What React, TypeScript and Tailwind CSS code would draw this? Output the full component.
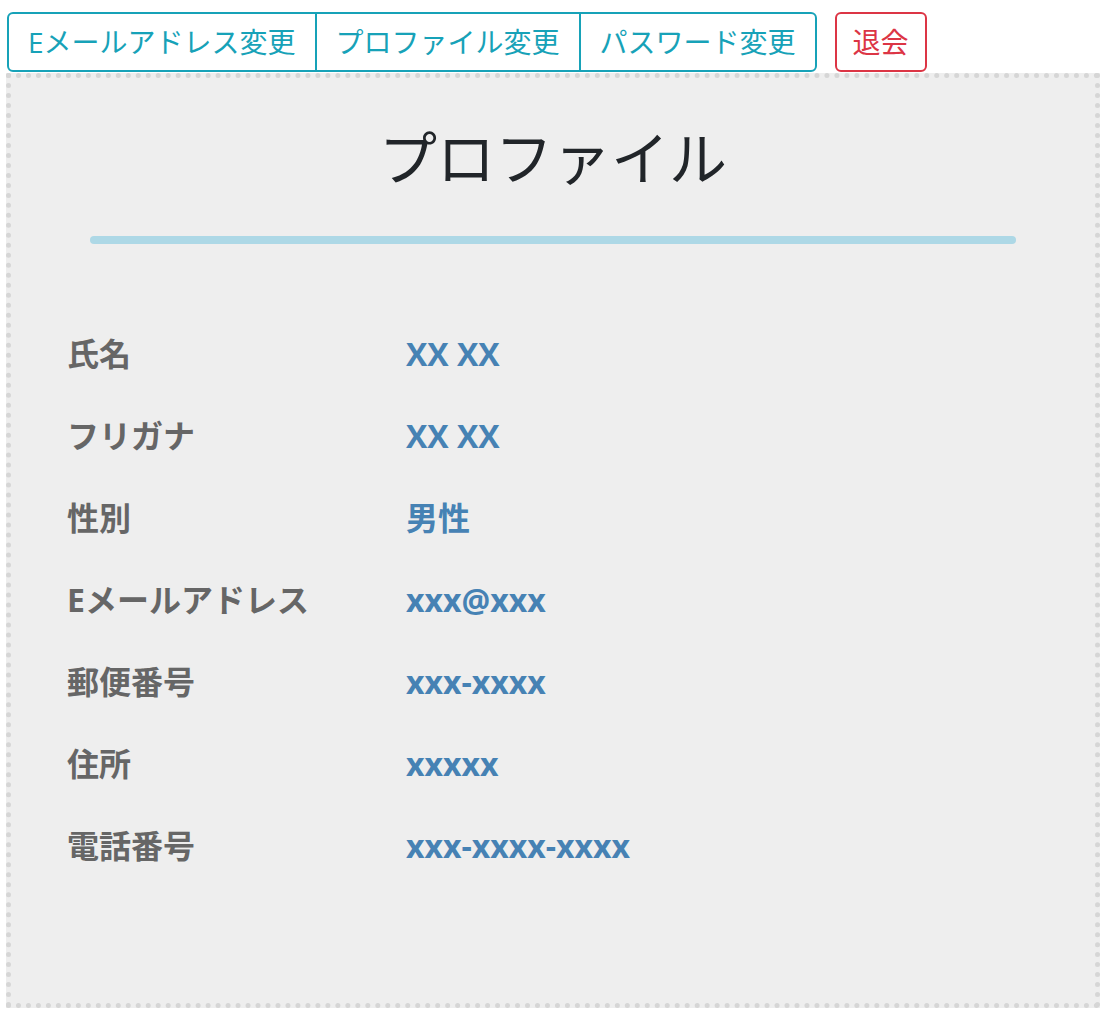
import React from 'react';

const rows: { label: string; value: string }[] = [
  { label: '氏名', value: 'XX XX' },
  { label: 'フリガナ', value: 'XX XX' },
  { label: '性別', value: '男性' },
  { label: 'Eメールアドレス', value: 'xxx@xxx' },
  { label: '郵便番号', value: 'xxx-xxxx' },
  { label: '住所', value: 'xxxxx' },
  { label: '電話番号', value: 'xxx-xxxx-xxxx' },
];

const tabs = ['Eメールアドレス変更', 'プロファイル変更', 'パスワード変更'];

export default function App() {
  return (
    <div
      className="min-h-screen bg-white pt-[12px]"
      style={{ fontFamily: '"Open Sans", "Noto Sans CJK JP", sans-serif' }}
    >
      {/* Tabs */}
      <div className="ml-[7px] flex items-stretch">
        <div className="flex">
          {tabs.map((t, i) => (
            <button
              key={t}
              className={
                'h-[60px] border-2 border-[#17a2b8] px-[19px] text-[28px] leading-[42px] text-[#17a2b8] ' +
                (i === 0 ? 'rounded-l-[6px]' : '-ml-[2px]') +
                (i === tabs.length - 1 ? ' rounded-r-[6px]' : '')
              }
            >
              {t}
            </button>
          ))}
        </div>
        <button className="ml-[18px] h-[60px] rounded-[6px] border-2 border-[#dc3545] px-4 text-[28px] leading-[42px] text-[#dc3545]">
          退会
        </button>
      </div>

      {/* Profile panel */}
      <div className="ml-[6px] mt-[1px] w-[1094px] border-[5px] border-dotted border-[#d6d6d6] bg-[#eeeeee] pb-[116px] pt-[45px]">
        <h1 className="text-center text-[58px] leading-[70px] font-normal text-[#212529]">プロファイル</h1>
        <div className="mx-[79px] mt-[43px] h-[8px] rounded-full bg-[#add8e6]" />

        <div className="mt-[69px] pl-[56px]">
          {rows.map((r) => (
            <div key={r.label} className="flex h-[82px] items-center text-[32px] font-bold">
              <div className="w-[339px] text-[#666666]">{r.label}</div>
              <div className="text-[#4682b4]">{r.value}</div>
            </div>
          ))}
        </div>
      </div>
    </div>
  );
}
